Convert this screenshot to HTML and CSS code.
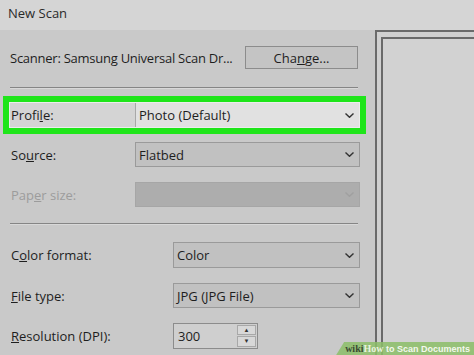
FILE: index.html
```html
<!DOCTYPE html>
<html lang="en">
<head>
  <meta charset="UTF-8">
  <title>New Scan</title>
  <link rel="stylesheet" href="styles.css">
</head>
<body>
  <div class="window">
    <div class="titlebar">New Scan</div>

    <div class="main">
      <div class="form">
        <div class="scanner-row">
          <span class="scanner-name">Scanner: Samsung Universal Scan Dr...</span>
          <button class="btn">Cha<u>n</u>ge...</button>
        </div>

        <div class="sep sep-top"></div>

        <div class="field field-wide highlight">
          <label>Profi<u>l</u>e:</label>
          <div class="select select-focus">
            <span>Photo (Default)</span>
            <svg class="chev" width="9" height="5" viewBox="0 0 9 5"><polyline points="0.5,0.5 4.5,4.3 8.5,0.5" /></svg>
          </div>
        </div>

        <div class="field field-wide">
          <label>So<u>u</u>rce:</label>
          <div class="select">
            <span>Flatbed</span>
            <svg class="chev" width="9" height="5" viewBox="0 0 9 5"><polyline points="0.5,0.5 4.5,4.3 8.5,0.5" /></svg>
          </div>
        </div>

        <div class="field field-wide disabled">
          <label>Pap<u>e</u>r size:</label>
          <div class="select">
            <span></span>
            <svg class="chev" width="9" height="5" viewBox="0 0 9 5"><polyline points="0.5,0.5 4.5,4.3 8.5,0.5" /></svg>
          </div>
        </div>

        <div class="sep sep-mid"></div>

        <div class="field field-narrow first">
          <label>C<u>o</u>lor format:</label>
          <div class="select">
            <span>Color</span>
            <svg class="chev" width="9" height="5" viewBox="0 0 9 5"><polyline points="0.5,0.5 4.5,4.3 8.5,0.5" /></svg>
          </div>
        </div>

        <div class="field field-narrow">
          <label><u>F</u>ile type:</label>
          <div class="select">
            <span>JPG (JPG File)</span>
            <svg class="chev" width="9" height="5" viewBox="0 0 9 5"><polyline points="0.5,0.5 4.5,4.3 8.5,0.5" /></svg>
          </div>
        </div>

        <div class="field field-narrow">
          <label><u>R</u>esolution (DPI):</label>
          <div class="spin">
            <span class="spin-value">300</span>
            <div class="spin-buttons">
              <span class="spin-btn">&#9650;</span>
              <span class="spin-btn">&#9660;</span>
            </div>
          </div>
        </div>
      </div>

      <div class="preview">
        <div class="preview-inner"></div>
      </div>
    </div>

    <div class="watermark"><span class="wm-wiki">wiki</span><span class="wm-how">How</span> to Scan Documents</div>
  </div>
</body>
</html>
```

FILE: styles.css
```css
body {
  margin: 0;
  font-family: "Open Sans", "Noto Sans", sans-serif;
  font-size: 13px;
  color: #1e1e1e;
  background: #c9c9c9;
}

.window {
  position: relative;
  width: 474px;
  height: 355px;
  overflow: hidden;
  background: #c9c9c9;
}

.titlebar {
  height: 30px;
  line-height: 27px;
  padding-left: 8px;
  background: #d5d5d5;
  color: #2a2a2a;
}

.main {
  display: flex;
  height: 325px;
}

.form {
  width: 351px;
  padding: 0 15px 0 9px;
  flex-shrink: 0;
}

.scanner-row {
  display: flex;
  align-items: center;
  justify-content: space-between;
  margin-top: 16px;
  height: 23px;
  padding-right: 2px;
}

.scanner-name {
  padding-left: 1px;
  letter-spacing: -0.25px;
}

.btn {
  width: 113px;
  height: 23px;
  padding: 0;
  font-family: inherit;
  font-size: 13px;
  color: #1e1e1e;
  background: #c4c4c4;
  border: 1px solid #8c8c8c;
}

.sep {
  height: 0;
  margin-left: 1px;
  margin-right: 2px;
  border-top: 1px solid #858585;
  border-bottom: 1px solid #d8d8d8;
}

.sep-top {
  margin-top: 18px;
}

.sep-mid {
  margin-top: 16px;
}

.field {
  display: flex;
  align-items: center;
  height: 25px;
  margin-top: 15px;
}

.field label {
  padding-left: 2px;
  flex-shrink: 0;
}

.field-wide label {
  width: 124px;
}

.field-narrow label {
  width: 162px;
}

.field-narrow.first {
  margin-top: 17px;
  height: 26px;
}

.highlight {
  height: 26px;
  margin: 7px -6px 0 -6px;
  border: 6px solid #1fe51a;
  background: #d4d4d4;
  outline: 1px solid #ececec;
  outline-offset: -7px;
}

.highlight + .field {
  margin-top: 8px;
}

.select {
  flex: 1;
  height: 100%;
  box-sizing: border-box;
  display: flex;
  align-items: center;
  justify-content: space-between;
  padding: 0 5px 0 3px;
  background: #c1c1c1;
  border: 1px solid #9a9a9a;
}

.select-focus {
  background: #e1e1e1;
  border-color: #a8a8a8;
}

.chev polyline {
  fill: none;
  stroke: #333;
  stroke-width: 1.4;
}

.disabled label {
  color: #9c9c9c;
}

.disabled .select {
  background: #adadad;
  border-color: #a6a6a6;
}

.disabled .chev polyline {
  stroke: #a0a0a0;
}

.spin {
  display: flex;
  align-items: stretch;
  width: 85px;
  height: 26px;
  box-sizing: border-box;
  border: 1px solid #8c8c8c;
  background: #cfcfcf;
}

.spin-value {
  flex: 1;
  padding-left: 4px;
  line-height: 24px;
}

.spin-buttons {
  display: flex;
  flex-direction: column;
  gap: 1px;
  width: 19px;
  padding: 1px 1px 1px 0;
}

.spin-btn {
  flex: 1;
  display: flex;
  align-items: center;
  justify-content: center;
  font-size: 6px;
  color: #333;
  background: #d8d8d8;
  border: 1px solid #a8a8a8;
}

.preview {
  flex: 1;
  padding: 5px 0 0 4px;
  border-left: 2px solid #6a6a6a;
  border-top: 2px solid #6a6a6a;
  background: #d0d0d0;
}

.preview-inner {
  height: 100%;
  border-left: 2px solid #6a6a6a;
  border-top: 2px solid #6a6a6a;
  background: #d2d2d2;
}

.watermark {
  position: absolute;
  right: 0;
  bottom: 0;
  height: 13px;
  padding: 0 4px 0 9px;
  font-family: "Liberation Sans", Arial, sans-serif;
  font-size: 9px;
  font-weight: bold;
  line-height: 14px;
  color: #f4f8ee;
  background: rgba(140, 190, 105, 0.85);
  clip-path: polygon(8px 0, 100% 0, 100% 100%, 0 100%);
  white-space: nowrap;
}

.wm-wiki {
  font-family: "Liberation Serif", serif;
  font-size: 10px;
  color: #3c4a32;
}

.wm-how {
  font-family: "Liberation Serif", serif;
  font-size: 10px;
  color: #e8f2de;
}
```
